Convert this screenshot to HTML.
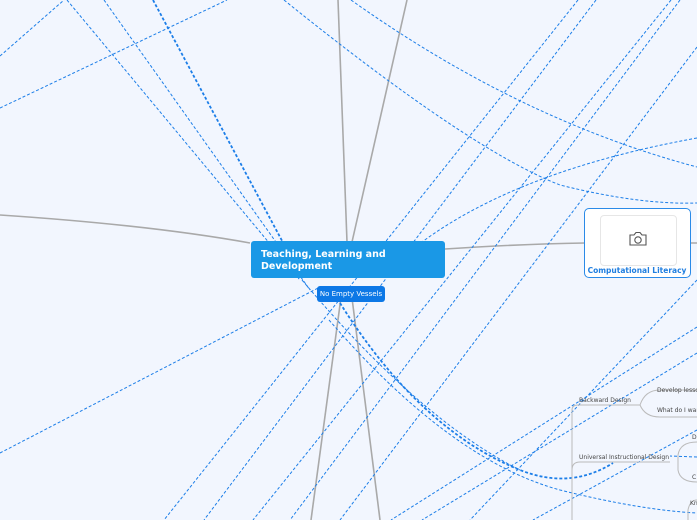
<!DOCTYPE html>
<html><head><meta charset="utf-8"><style>
html,body{margin:0;padding:0;width:697px;height:520px;overflow:hidden;background:#f2f6fe;font-family:"DejaVu Sans","Liberation Sans",sans-serif;}
.abs{position:absolute}
</style></head><body>
<svg class="abs" style="left:0;top:0" width="697" height="520">
<g fill="none" stroke="#a9a9a9" stroke-width="1.6">
<path d="M338 0 L347 242"/>
<path d="M407 0 L352 242"/>
<path d="M0 215 Q150 225 250 243"/>
<path d="M445 249 Q520 244 585 243 L697 243"/>
<path d="M342 290 L311 520"/>
<path d="M351 290 L380 520"/>
</g>
<g fill="none" stroke="#1c7ee8" stroke-width="1" stroke-dasharray="3,2">
<path d="M0 56 L64 0"/>
<path d="M0 108 L227 0"/>
<path d="M67 0 L300 280"/>
<path d="M104 0 L310 290"/>
<path d="M153 0 L295 265" stroke-width="1.8"/>
<path d="M284 0 Q470 150 560 185 Q640 205 697 203"/>
<path d="M351 0 Q520 120 697 167"/>
<path d="M578 0 L164 520"/>
<path d="M596 0 L204 520"/>
<path d="M671 0 L253 520"/>
<path d="M680 0 L290 520"/>
<path d="M697 47 L340 520"/>
<path d="M697 138 Q520 170 422 242"/>
<path d="M0 453 L320 287"/>
<path d="M697 327 L391 520"/>
<path d="M697 353 L422 520"/>
<path d="M697 280 L470 520"/>
<path d="M697 430 L533 520"/>
<path d="M340 303 Q420 430 520 470 Q570 490 613 463" stroke-width="1.8"/>
<path d="M329 320 Q450 460 560 490 Q640 510 697 513"/>
<path d="M302 280 Q420 420 520 470"/>
<path d="M697 457 L670 456"/>
</g>
<g fill="none" stroke="#bbb" stroke-width="1">
<path d="M572 520 L572 410 Q572 405 578 405 L640 405"/>
<path d="M640 405 Q645 390 660 390 L697 390"/>
<path d="M640 405 Q645 417 660 417 L697 417"/>
<path d="M572 470 Q572 462 580 462 L670 462"/>
<path d="M697 442 Q680 442 678 455 L678 470 Q680 482 697 482"/>
<path d="M697 500 Q690 500 688 510 L688 520"/>
</g>
</svg>
<div class="abs" style="left:251px;top:241px;width:194px;height:37px;background:#1a98e6;border-radius:3px;color:#fff;font-weight:bold;font-size:9.5px;line-height:12px;padding:8px 0 0 10px;box-sizing:border-box">Teaching, Learning and<br>Development</div>
<div class="abs" style="left:317px;top:286px;width:68px;height:16px;background:#0d78e6;border-radius:3px;color:#fff;font-size:7px;line-height:16px;text-align:center">No Empty Vessels</div>
<div class="abs" style="left:584px;top:208px;width:107px;height:70px;background:#fff;border:1.5px solid #2a8ae8;border-radius:5px;box-sizing:border-box">
<div class="abs" style="left:15px;top:6px;width:75px;height:49px;border:1px solid #e6e6e6;border-radius:4px;background:#fff"></div>
<svg class="abs" style="left:43px;top:22px" width="20" height="16"><path d="M2 4 H6 L8 1.5 H12 L14 4 H18 V14 H2 Z" fill="none" stroke="#555" stroke-width="1.1"/><circle cx="10" cy="9" r="3.2" fill="none" stroke="#555" stroke-width="1.1"/></svg>
<div class="abs" style="left:0;top:57px;width:104px;text-align:center;color:#1f7ee0;font-weight:bold;font-size:7.5px">Computational Literacy</div>
</div>
<div class="abs" style="left:579px;top:397px;font-size:6px;color:#444">Backward Design</div>
<div class="abs" style="left:657px;top:387px;font-size:6px;color:#444;white-space:nowrap">Develop lesson</div>
<div class="abs" style="left:657px;top:407px;font-size:6px;color:#444;white-space:nowrap">What do I want</div>
<div class="abs" style="left:579px;top:454px;font-size:6px;color:#444;white-space:nowrap">Universal Instructional Design</div>
<div class="abs" style="left:692px;top:434px;font-size:6px;color:#444">D</div>
<div class="abs" style="left:692px;top:474px;font-size:6px;color:#444">C</div>
<div class="abs" style="left:690px;top:500px;font-size:6px;color:#444">Kn</div>
</body></html>
